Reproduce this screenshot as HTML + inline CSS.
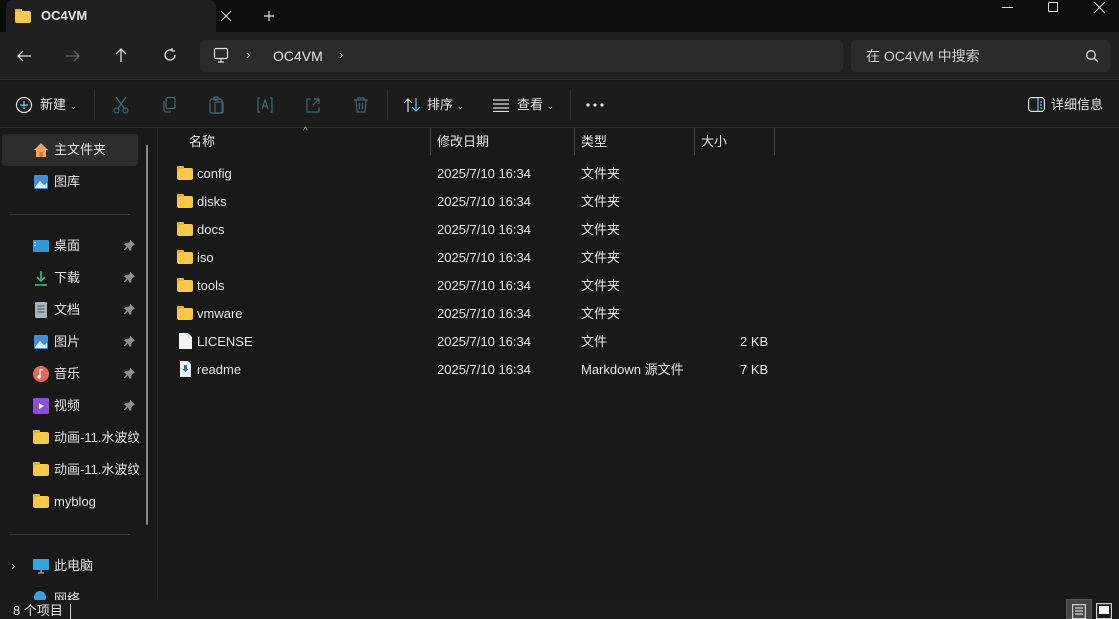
<!DOCTYPE html>
<html><head><meta charset="utf-8"><style>
*{margin:0;padding:0;box-sizing:border-box}
body{width:1119px;height:619px;overflow:hidden;background:#191919;font-family:"Liberation Sans","Noto Sans CJK SC",sans-serif;font-size:13px;color:#e6e6e6;position:relative}
.a{position:absolute}
.t{position:absolute;white-space:nowrap;line-height:16px}
.fold{position:absolute;width:16px;height:12px;background:#f7c948;border-radius:2px}
.fold:before{content:"";position:absolute;left:0;top:-2px;width:7px;height:3px;background:#e9b43a;border-radius:1px 1px 0 0}
.ic{position:absolute;width:16px;height:16px}
.pin{position:absolute;left:124px;width:11px;height:11px}
</style></head><body>
<svg width="0" height="0" style="position:absolute"><defs><symbol id="pn" viewBox="0 0 12 12"><path d="M7 0L12 5L10.5 5.5L8 8L8 10.5L6.5 12L4 8L1 11L0 11L0 10L3 7L0 5L1.5 3.5L4 3.5L6.5 1.5Z" fill="#8f8f8f"/></symbol></defs></svg>
<!-- title bar -->
<div class="a" style="left:0;top:0;width:1119px;height:32px;background:#0c0c0c"></div>
<div class="a" style="left:6px;top:0;width:210px;height:32px;background:#202020;border-radius:7px 7px 0 0"></div>
<div class="fold" style="left:15px;top:11px"></div>
<div class="t" style="left:41px;top:8px;font-weight:bold;font-size:13px">OC4VM</div>
<svg class="a" style="left:220px;top:10px" width="12" height="12"><path d="M1 1L11 11M11 1L1 11" stroke="#ddd" stroke-width="1.2"/></svg>
<svg class="a" style="left:263px;top:10px" width="12" height="12"><path d="M6 1V11M1 6H11" stroke="#ddd" stroke-width="1.2"/></svg>
<div class="a" style="left:1002px;top:7px;width:11px;height:1px;background:#ddd"></div>
<div class="a" style="left:1048px;top:2px;width:10px;height:10px;border:1px solid #ddd"></div>
<svg class="a" style="left:1094px;top:2px" width="11" height="11"><path d="M0 0L11 11M11 0L0 11" stroke="#ddd" stroke-width="1.1"/></svg>
<!-- nav row -->
<div class="a" style="left:0;top:32px;width:1119px;height:48px;background:#202020;border-bottom:1px solid #333"></div>
<svg class="a" style="left:16px;top:48px" width="16" height="16" fill="none" stroke="#ddd" stroke-width="1.3"><path d="M15 8H2M7 3L2 8L7 13"/></svg>
<svg class="a" style="left:65px;top:48px" width="16" height="16" fill="none" stroke="#666" stroke-width="1.3"><path d="M1 8H14M9 3L14 8L9 13"/></svg>
<svg class="a" style="left:113px;top:47px" width="16" height="16" fill="none" stroke="#ddd" stroke-width="1.3"><path d="M8 15V2M3 7L8 2L13 7"/></svg>
<svg class="a" style="left:162px;top:47px" width="16" height="16" fill="none" stroke="#ddd" stroke-width="1.3"><path d="M13 8A5 5 0 1 1 10 3.4M10 1V4H13"/></svg>
<div class="a" style="left:200px;top:40px;width:643px;height:32px;background:#2b2b2b;border-radius:5px"></div>
<svg class="a" style="left:213px;top:47px" width="17" height="17" fill="none" stroke="#ddd" stroke-width="1.2"><rect x="1.5" y="1.5" width="13" height="10" rx="1.5"/><path d="M8 12V15M5 15H11"/></svg>
<div class="t" style="left:246px;top:47px;color:#ddd">›</div>
<div class="t" style="left:273px;top:48px;font-size:14px">OC4VM</div>
<div class="t" style="left:339px;top:47px;color:#ddd">›</div>
<div class="a" style="left:851px;top:40px;width:259px;height:32px;background:#2b2b2b;border-radius:5px"></div>
<div class="t" style="left:866px;top:48px;font-size:14px;color:#cfcfcf">在 OC4VM 中搜索</div>
<svg class="a" style="left:1085px;top:49px" width="14" height="14" fill="none" stroke="#ddd" stroke-width="1.3"><circle cx="6" cy="6" r="4.3"/><path d="M9 9L13 13"/></svg>
<!-- toolbar -->
<div class="a" style="left:0;top:81px;width:1119px;height:47px;background:#1c1c1c;border-bottom:1px solid #2e2e2e"></div>
<svg class="a" style="left:15px;top:96px" width="18" height="18" fill="none" stroke="#ddd" stroke-width="1.2"><circle cx="9" cy="9" r="7.5"/><path d="M9 5V13M5 9H13" stroke="#6cc4f0"/></svg>
<div class="t" style="left:40px;top:97px">新建 <span style="font-size:9px;color:#aaa">⌄</span></div>
<div class="a" style="left:94px;top:90px;width:1px;height:30px;background:#333"></div>
<svg class="a" style="left:112px;top:96px" width="18" height="18" fill="none" stroke="#3e6677" stroke-width="1.2"><path d="M4 1L12 12M14 1L6 12"/><circle cx="4.5" cy="14.5" r="2.5"/><circle cx="13.5" cy="14.5" r="2.5"/></svg>
<svg class="a" style="left:160px;top:96px" width="18" height="18" fill="none" stroke="#3e6677" stroke-width="1.2"><rect x="6" y="1.5" width="9" height="11" rx="2"/><path d="M4 5V14A2 2 0 0 0 6 16H11"/></svg>
<svg class="a" style="left:208px;top:96px" width="18" height="18" fill="none" stroke="#3e6677" stroke-width="1.2"><rect x="2" y="3" width="12" height="14" rx="2"/><rect x="7" y="6" width="8" height="11" rx="1"/><path d="M6 1H10V4H6Z"/></svg>
<svg class="a" style="left:256px;top:96px" width="18" height="18" fill="none" stroke="#3e6677" stroke-width="1.2"><path d="M4 2H2V16H4M14 2H16V16H14M6 13L9 4L12 13M7 10H11"/></svg>
<svg class="a" style="left:304px;top:96px" width="18" height="18" fill="none" stroke="#3e6677" stroke-width="1.2"><path d="M7 3H3V16H15V11M10 3H15V8M15 3L9 9"/></svg>
<svg class="a" style="left:352px;top:96px" width="18" height="18" fill="none" stroke="#3e6677" stroke-width="1.2"><path d="M2 4H16M6 4V2H12V4M4 4L5 16H13L14 4M7.5 7V13M10.5 7V13"/></svg>
<div class="a" style="left:387px;top:90px;width:1px;height:30px;background:#333"></div>
<svg class="a" style="left:403px;top:97px" width="18" height="16" fill="none" stroke-width="1.2"><path d="M5 15V2M1 6L5 2L9 6" stroke="#ddd"/><path d="M13 1V14M9 10L13 14L17 10" stroke="#6cc4f0"/></svg>
<div class="t" style="left:427px;top:97px">排序 <span style="font-size:9px;color:#aaa">⌄</span></div>
<svg class="a" style="left:493px;top:98px" width="16" height="14" stroke="#ddd" stroke-width="1.2"><path d="M0 2H16M0 6H16M0 10H16M0 13.5H16"/></svg>
<div class="t" style="left:517px;top:97px">查看 <span style="font-size:9px;color:#aaa">⌄</span></div>
<div class="a" style="left:570px;top:90px;width:1px;height:30px;background:#333"></div>
<svg class="a" style="left:586px;top:103px" width="18" height="4" fill="#e6e6e6"><circle cx="2" cy="2" r="1.6"/><circle cx="9" cy="2" r="1.6"/><circle cx="16" cy="2" r="1.6"/></svg>
<svg class="a" style="left:1028px;top:97px" width="17" height="15" fill="none" stroke-width="1.2"><rect x="0.6" y="0.6" width="15.8" height="13.8" rx="3" stroke="#ddd"/><path d="M10 1V14M12 5H14M12 8H14M12 11H14" stroke="#6cc4f0"/></svg>
<div class="t" style="left:1051px;top:97px">详细信息</div>
<!-- sidebar -->
<div class="a" style="left:2px;top:134px;width:136px;height:32px;background:#2d2d2d;border-radius:4px"></div>
<svg class="ic" style="left:33px;top:142px" viewBox="0 0 16 16"><path d="M8 1L15 8H13V15H3V8H1Z" fill="#f2a25c"/><rect x="6.5" y="10" width="3" height="5" fill="#c8763a"/></svg>
<div class="t" style="left:54px;top:142px">主文件夹</div>
<svg class="ic" style="left:33px;top:174px" viewBox="0 0 16 16"><rect x="1" y="1" width="14" height="14" rx="1.5" fill="#3b8fdc"/><path d="M2 13L7 7L11 11L14 9V14H2Z" fill="#dff1ff"/></svg>
<div class="t" style="left:54px;top:174px">图库</div>
<div class="a" style="left:9px;top:214px;width:121px;height:1px;background:#3a3a3a"></div>
<svg class="ic" style="left:33px;top:238px" viewBox="0 0 16 16"><rect x="0" y="2" width="16" height="12" rx="1" fill="#2f9ad6"/><rect x="1" y="4" width="2" height="1" fill="#fff"/><rect x="1" y="7" width="2" height="1" fill="#fff"/></svg>
<div class="t" style="left:54px;top:238px">桌面</div><svg class="pin" style="top:240px"><use href="#pn"/></svg>
<svg class="ic" style="left:33px;top:270px" viewBox="0 0 16 16" fill="none" stroke="#3ac08c" stroke-width="1.5"><path d="M8 1V11M4 7L8 11L12 7M2 15H14"/></svg>
<div class="t" style="left:54px;top:270px">下载</div><svg class="pin" style="top:272px"><use href="#pn"/></svg>
<svg class="ic" style="left:33px;top:302px" viewBox="0 0 16 16"><rect x="2" y="0" width="12" height="16" rx="1.5" fill="#aab4c0"/><path d="M4.5 4H11.5M4.5 7H11.5M4.5 10H11.5" stroke="#455" stroke-width="1"/></svg>
<div class="t" style="left:54px;top:302px">文档</div><svg class="pin" style="top:304px"><use href="#pn"/></svg>
<svg class="ic" style="left:33px;top:334px" viewBox="0 0 16 16"><rect x="1" y="1" width="14" height="14" rx="1.5" fill="#3b8fdc"/><path d="M2 13L7 7L11 11L14 9V14H2Z" fill="#dff1ff"/></svg>
<div class="t" style="left:54px;top:334px">图片</div><svg class="pin" style="top:336px"><use href="#pn"/></svg>
<svg class="ic" style="left:33px;top:366px" viewBox="0 0 16 16"><circle cx="8" cy="8" r="8" fill="#e06a52"/><path d="M7 11V4L10 3.5" stroke="#fff" stroke-width="1.3" fill="none"/><circle cx="6" cy="11" r="1.6" fill="#fff"/></svg>
<div class="t" style="left:54px;top:366px">音乐</div><svg class="pin" style="top:368px"><use href="#pn"/></svg>
<svg class="ic" style="left:33px;top:398px" viewBox="0 0 16 16"><rect x="0" y="0" width="16" height="16" rx="1.5" fill="#8b4fd8"/><path d="M6 5V11L11 8Z" fill="#fff"/></svg>
<div class="t" style="left:54px;top:398px">视频</div><svg class="pin" style="top:400px"><use href="#pn"/></svg>
<div class="fold" style="left:33px;top:432px"></div><div class="t" style="left:54px;top:430px;width:85px;overflow:hidden">动画-11.水波纹效果</div>
<div class="fold" style="left:33px;top:464px"></div><div class="t" style="left:54px;top:462px;width:85px;overflow:hidden">动画-11.水波纹效果</div>
<div class="fold" style="left:33px;top:496px"></div><div class="t" style="left:54px;top:494px">myblog</div>
<div class="a" style="left:146px;top:145px;width:2px;height:380px;background:#8a8a8a;border-radius:1px"></div>
<div class="a" style="left:9px;top:534px;width:121px;height:1px;background:#3a3a3a"></div>
<div class="t" style="left:11px;top:558px;color:#ccc">›</div>
<svg class="ic" style="left:33px;top:558px" viewBox="0 0 16 16"><rect x="0" y="1" width="16" height="11" rx="1" fill="#2fa7e0"/><path d="M8 12V15M5 15H11" stroke="#aaa" stroke-width="1.3"/></svg>
<div class="t" style="left:54px;top:558px">此电脑</div>
<svg class="ic" style="left:33px;top:590px" viewBox="0 0 16 16"><circle cx="7" cy="7" r="6" fill="#3aa0e0"/></svg>
<div class="t" style="left:54px;top:591px">网络</div>
<div class="a" style="left:157px;top:128px;width:1px;height:472px;background:#2a2a2a"></div>
<!-- header -->
<div class="t" style="left:303px;top:124px;font-size:10px;color:#aaa">^</div>
<div class="t" style="left:189px;top:134px">名称</div>
<div class="a" style="left:430px;top:128px;width:1px;height:27px;background:#444"></div>
<div class="t" style="left:437px;top:134px">修改日期</div>
<div class="a" style="left:574px;top:128px;width:1px;height:27px;background:#444"></div>
<div class="t" style="left:581px;top:134px">类型</div>
<div class="a" style="left:694px;top:128px;width:1px;height:27px;background:#444"></div>
<div class="t" style="left:701px;top:134px">大小</div>
<div class="a" style="left:774px;top:128px;width:1px;height:27px;background:#444"></div>
<!-- rows -->
<div class="fold" style="left:177px;top:168px"></div><div class="t" style="left:197px;top:166px">config</div><div class="t" style="left:437px;top:166px">2025/7/10 16:34</div><div class="t" style="left:581px;top:166px">文件夹</div>
<div class="fold" style="left:177px;top:196px"></div><div class="t" style="left:197px;top:194px">disks</div><div class="t" style="left:437px;top:194px">2025/7/10 16:34</div><div class="t" style="left:581px;top:194px">文件夹</div>
<div class="fold" style="left:177px;top:224px"></div><div class="t" style="left:197px;top:222px">docs</div><div class="t" style="left:437px;top:222px">2025/7/10 16:34</div><div class="t" style="left:581px;top:222px">文件夹</div>
<div class="fold" style="left:177px;top:252px"></div><div class="t" style="left:197px;top:250px">iso</div><div class="t" style="left:437px;top:250px">2025/7/10 16:34</div><div class="t" style="left:581px;top:250px">文件夹</div>
<div class="fold" style="left:177px;top:280px"></div><div class="t" style="left:197px;top:278px">tools</div><div class="t" style="left:437px;top:278px">2025/7/10 16:34</div><div class="t" style="left:581px;top:278px">文件夹</div>
<div class="fold" style="left:177px;top:308px"></div><div class="t" style="left:197px;top:306px">vmware</div><div class="t" style="left:437px;top:306px">2025/7/10 16:34</div><div class="t" style="left:581px;top:306px">文件夹</div>
<svg class="ic" style="left:178px;top:333px" viewBox="0 0 16 16"><path d="M1 0H10L14 4V16H1Z" fill="#f2f2f2"/></svg>
<div class="t" style="left:197px;top:334px">LICENSE</div><div class="t" style="left:437px;top:334px">2025/7/10 16:34</div><div class="t" style="left:581px;top:334px">文件</div><div class="t" style="left:740px;top:334px">2 KB</div>
<svg class="ic" style="left:178px;top:361px" viewBox="0 0 16 16"><path d="M2 0H10L13 3V16H2Z" fill="#eef2f6"/><path d="M6 4H9V8H10.5L7.5 11L4.5 8H6Z" fill="#2a6fb0"/></svg>
<div class="t" style="left:197px;top:362px">readme</div><div class="t" style="left:437px;top:362px">2025/7/10 16:34</div><div class="t" style="left:581px;top:362px">Markdown 源文件</div><div class="t" style="left:740px;top:362px">7 KB</div>
<!-- status -->
<div class="a" style="left:0;top:600px;width:1119px;height:19px;background:#1b1b1b"></div>
<div class="t" style="left:13px;top:603px">8 个项目</div>
<div class="a" style="left:70px;top:604px;width:1px;height:15px;background:#ccc"></div>
<div class="a" style="left:1066px;top:599px;width:26px;height:20px;background:#454545;border:1px solid #555"></div>
<svg class="a" style="left:1072px;top:604px" width="14" height="15" stroke="#ddd" stroke-width="1.3"><rect x="0.6" y="0.6" width="12.8" height="14" fill="none" stroke="#ccc"/><path d="M3 4H11M3 7H11M3 10H11"/></svg>
<svg class="a" style="left:1096px;top:603px" width="16" height="16"><rect x="0.6" y="0.6" width="14.8" height="15" fill="none" stroke="#ccc" stroke-width="1.2"/><rect x="3" y="3" width="10" height="8" fill="#fff"/></svg>
</body></html>
